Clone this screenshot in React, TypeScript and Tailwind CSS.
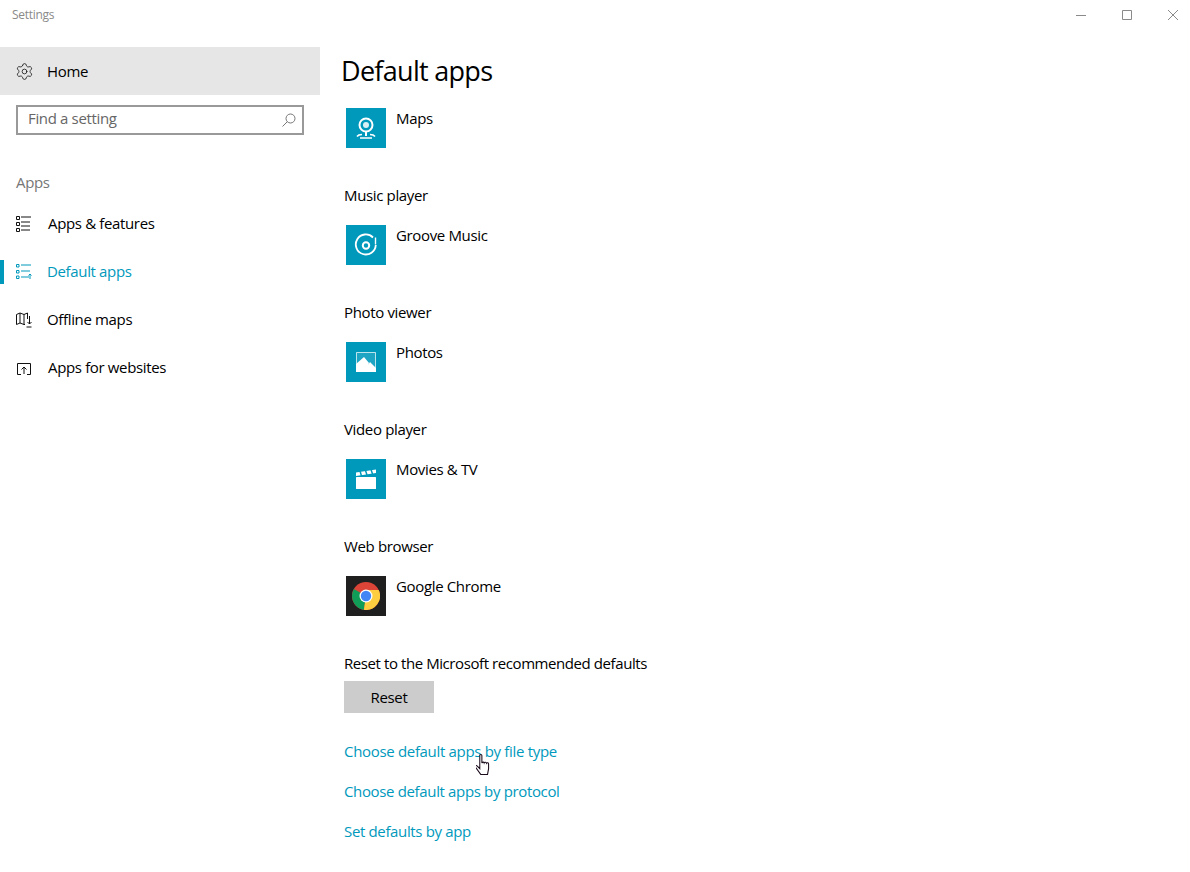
import { Settings } from 'lucide-react';

const FONT = "font-['Open_Sans','Noto_Sans',sans-serif]";

const ListIcon = () => (
  <svg width="16" height="16" viewBox="0 0 16 16" fill="none" stroke="#111" strokeWidth="1">
    <path d="M.5 .5h3v3h-3zM.5 6.5h3v3h-3zM.5 12.5h3v3h-3zM5 1h10M5 6h9M5 10h9M5 14h9" />
  </svg>
);

const DefaultsIcon = () => (
  <svg width="16" height="16" viewBox="0 0 16 16" fill="none" stroke="#0099bc" strokeWidth="1">
    <path d="M.5 .5h2.500v2.500h-2.500zM.5 6.500h2.500v2.500h-2.500zM.5 12h2.500v2.500h-2.500zM5 1h10M5 7h9M5 13h8M14 15v-5M12.500 11.500l1.500-1.500 1.500 1.500" />
  </svg>
);

const MapIcon = () => (
  <svg width="16" height="16" viewBox="0 0 16 16" fill="none" stroke="#111" strokeWidth="1">
    <path d="M.5 2.500l3.500-1.500 4 1.500 3.500-1.500v6M.5 2.500v10l3.500-1.500 4 1.500h1M4 1v10M8 2.500v10M13.500 4v8M11.500 10l2 2 2-2M10.500 15h5" />
  </svg>
);

const WebsiteIcon = () => (
  <svg width="16" height="16" viewBox="0 0 16 16" fill="none" stroke="#111" strokeWidth="1">
    <path d="M5 14.500h-3.500v-11h13v11h-3.500M8 14v-7M5.500 9.500l2.500-2.500 2.500 2.500" />
  </svg>
);

const MapsGlyph = () => (
  <svg width="22" height="24" viewBox="0 0 22 24" fill="none">
    <circle cx="11" cy="9" r="6.500" stroke="#fff" strokeWidth="2" />
    <circle cx="11" cy="9" r="3" fill="#fff" fillOpacity="0.85" />
    <path d="M11 15v5" stroke="#fff" strokeWidth="2" />
    <path d="M2 20.500c1-1.500 3-2 5-2M20 20.500c-1-1.500-3-2-5-2M5 22h12" stroke="#fff" strokeWidth="1.500" />
  </svg>
);

const GrooveGlyph = () => (
  <svg width="24" height="24" viewBox="0 0 24 24" fill="none">
    <path d="M19 4.500a10 10 0 1 0 2.800 7.500" stroke="#fff" strokeWidth="1.800" />
    <path d="M21.500 4.500v7" stroke="#fff" strokeWidth="1.400" />
    <circle cx="12" cy="12.500" r="3.200" stroke="#fff" strokeWidth="2" />
  </svg>
);

const PhotosGlyph = () => (
  <svg width="20" height="20" viewBox="0 0 20 20" fill="none">
    <path d="M0 0h20v20h-20z" fill="#fff" fillOpacity="0.12" />
    <path d="M.5 .5h19v19h-19z" stroke="#fff" strokeOpacity="0.7" />
    <path d="M0 20v-8l8-7 5 6-1 2 2-3 6 6v4z" fill="#fff" />
  </svg>
);

const MoviesGlyph = () => (
  <svg width="20" height="20" viewBox="0 0 20 20" fill="none">
    <rect x="0" y="8" width="20" height="12" rx="0.500" fill="#fff" />
    <path d="M0 3.500L20 .5v3.500L0 7z" fill="#fff" />
    <path d="M4 2l1.500 5M9.500 1.500l1.500 4.500M15 .5l1.500 4.500" stroke="#0099bc" strokeWidth="1.500" />
  </svg>
);

const ChromeGlyph = () => (
  <svg width="28" height="28" viewBox="0 0 28 28">
    <circle cx="14" cy="14" r="14" fill="#db4437" />
    <path d="M14 14L1.900 7a14 14 0 0 0 10 20.800z" fill="#0f9d58" />
    <path d="M14 8h12.700a14 14 0 0 1-14.800 19.800L14 14z" fill="#ffcd40" />
    <circle cx="14" cy="14" r="6.500" fill="#fff" />
    <circle cx="14" cy="14" r="5.200" fill="#4285f4" />
  </svg>
);

const navItems = [
  { label: 'Apps & features', icon: <ListIcon />, textClass: 'ml-[16px]' },
  { label: 'Default apps', icon: <DefaultsIcon />, active: true, textClass: 'ml-[15px]' },
  { label: 'Offline maps', icon: <MapIcon />, textClass: 'ml-[15px]' },
  { label: 'Apps for websites', icon: <WebsiteIcon />, textClass: 'ml-[16px]' },
];

const AppTile = ({ glyph, name, dark }: { glyph: React.ReactNode; name: string; dark?: boolean }) => (
  <div className="flex ml-[2px]">
    <div className={`w-[40px] h-[40px] flex items-center justify-center ${dark ? 'bg-[#1f1f1f]' : 'bg-[#0099bc]'}`}>
      {glyph}
    </div>
    <span className="ml-[10px] h-[22px] leading-[20px] text-black">{name}</span>
  </div>
);

const Section = ({ label, glyph, name, dark }: { label: string; glyph: React.ReactNode; name: string; dark?: boolean }) => (
  <div className="mt-[37px]">
    <div className="h-[22px] leading-[20px] text-black">{label}</div>
    <div className="mt-[18px]">
      <AppTile glyph={glyph} name={name} dark={dark} />
    </div>
  </div>
);

export default function App() {
  return (
    <div className={`relative w-[1190px] h-[872px] bg-white overflow-hidden text-[15px] tracking-[-0.35px] ${FONT}`}>
      <div className="h-[47px] flex items-start justify-between">
        <span className="ml-[12px] mt-[7px] text-[12px] tracking-[-0.3px] leading-[16px] text-[#8a8a8a]">Settings</span>
        <div className="flex items-center h-[30px]">
          <svg width="10" height="10" viewBox="0 0 10 10" className="mr-[36px]" stroke="#8a8a8a" fill="none">
            <path d="M0 5.500h10" />
          </svg>
          <svg width="10" height="10" viewBox="0 0 10 10" className="mr-[36px]" stroke="#8a8a8a" fill="none">
            <path d="M.5 .5h9v9h-9z" />
          </svg>
          <svg width="10" height="10" viewBox="0 0 10 10" className="mr-[12px]" stroke="#8a8a8a" fill="none">
            <path d="M0 0l10 10M10 0l-10 10" />
          </svg>
        </div>
      </div>

      <div className="flex">
        <div className="w-[320px] shrink-0">
          <div className="h-[48px] bg-[#e6e6e6] flex items-center pl-[15px] text-black">
            <Settings size={19} strokeWidth={1} color="#111" />
            <span className="ml-[13px]">Home</span>
          </div>
          <div className="mt-[10px] mx-[16px] h-[30px] border-2 border-[#999] flex items-center justify-between pl-[10px] pr-[6px]">
            <span className="text-[#666] pb-[4px] leading-[20px]">Find a setting</span>
            <svg width="14" height="14" viewBox="0 0 14 14" fill="none" stroke="#777">
              <circle cx="8.500" cy="5.500" r="4.500" />
              <path d="M5.300 8.700L.5 13.500" />
            </svg>
          </div>
          <div className="mt-[37px] ml-[16px] h-[22px] leading-[20px] text-[#767676]">Apps</div>
          <div className="mt-[6px]">
            {navItems.map((item) => (
              <div key={item.label} className="h-[48px] flex items-center pl-[16px] relative">
                {item.active && <div className="absolute left-0 top-[12px] w-[4px] h-[24px] bg-[#0099bc]" />}
                {item.icon}
                <span className={`pb-[2px] ${item.textClass} ${item.active ? 'text-[#0099bc]' : 'text-black'}`}>{item.label}</span>
              </div>
            ))}
          </div>
        </div>

        <div className="pl-[24px]">
          <div className="h-[48px] flex items-center -ml-[3px] text-[27px] tracking-[-0.7px] text-black">Default apps</div>
          <div className="mt-[13px]">
            <AppTile glyph={<MapsGlyph />} name="Maps" />
          </div>
          <Section label="Music player" glyph={<GrooveGlyph />} name="Groove Music" />
          <Section label="Photo viewer" glyph={<PhotosGlyph />} name="Photos" />
          <Section label="Video player" glyph={<MoviesGlyph />} name="Movies & TV" />
          <Section label="Web browser" glyph={<ChromeGlyph />} name="Google Chrome" dark />
          <div className="mt-[37px] h-[22px] leading-[20px] tracking-[-0.42px] text-black">Reset to the Microsoft recommended defaults</div>
          <div className="mt-[6px] w-[90px] h-[32px] bg-[#cccccc] flex items-center justify-center text-black">Reset</div>
          <div className="mt-[28px] h-[22px] leading-[20px] tracking-[-0.32px] text-[#0099bc]">Choose default apps by file type</div>
          <div className="mt-[18px] h-[22px] leading-[20px] text-[#0099bc]">Choose default apps by protocol</div>
          <div className="mt-[18px] h-[22px] leading-[20px] text-[#0099bc]">Set defaults by app</div>
        </div>
      </div>

      {/* mouse pointer sits over the link */}
      <svg width="17" height="22" viewBox="0 0 16 21" className="absolute left-[476px] top-[754px]" fill="#fff" stroke="#1a0a1a" strokeWidth="1">
        <path d="M3.500 1.500c0-1.300 2-1.300 2 0v7c.5-1 2-1 2.200 0 .4-1 2-.8 2.200.3.500-.8 2-.4 2 .7v4.500l-1 5.500h-6.500l-5-7c-.6-1 .8-2 1.500-1.200l2.600 2.700z" />
      </svg>
    </div>
  );
}
